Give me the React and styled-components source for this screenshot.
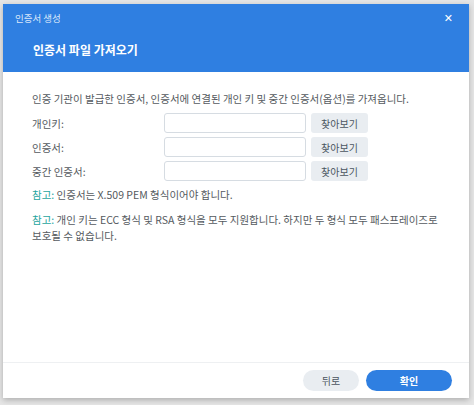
import React from "react";
import styled, { createGlobalStyle } from "styled-components";

const GlobalStyle = createGlobalStyle`
    html, body {
        margin: 0;
        padding: 0;
        background: #e6e6e6;
        font-family: "Noto Sans CJK KR", "Noto Sans", sans-serif;
    }
`;

const Page = styled.div`
    width: 474px;
    height: 405px;
    box-sizing: border-box;
    padding: 4px 5px 7px 3px;
`;

const Dialog = styled.div`
    height: 100%;
    display: flex;
    flex-direction: column;
    background: #ffffff;
    box-shadow: 0 2px 6px rgba(0, 0, 0, 0.25);
`;

const Header = styled.div`
    height: 68px;
    background: #2f7fe1;
    color: #ffffff;
    box-sizing: border-box;
    padding: 6px 16px 0 12px;
    display: flex;
    flex-direction: column;
`;

const TopBar = styled.div`
    display: flex;
    align-items: center;
    justify-content: space-between;
    height: 16px;
    font-size: 9.5px;
    color: #dbe8fa;
`;

const Close = styled.span`
    font-family: "DejaVu Sans", sans-serif;
    font-size: 11px;
    font-weight: bold;
    color: #ffffff;
`;

const Title = styled.h1`
    margin: 14px 0 0 18px;
    font-size: 12px;
    font-weight: bold;
    line-height: 20px;
`;

const Body = styled.div`
    flex: 1;
    padding: 19px 20px 0 29px;
    font-size: 10.5px;
    color: #555a60;
`;

const Desc = styled.p`
    margin: 0 0 6px;
    line-height: 16px;
`;

const Row = styled.div`
    display: grid;
    grid-template-columns: 127px 142px 57px;
    column-gap: 5px;
    align-items: center;
    margin-bottom: 4px;
`;

const Input = styled.div`
    height: 20px;
    box-sizing: border-box;
    border: 1px solid #d6dce2;
    border-radius: 3px;
    background: #fff;
`;

const Browse = styled.div`
    height: 20px;
    display: flex;
    align-items: center;
    justify-content: center;
    background: #e9edf1;
    border-radius: 3px;
    color: #4b5560;
    font-size: 10px;
`;

const Note = styled.p`
    margin: ${(p) => p.$top}px 0 0;
    line-height: 16px;
`;

const Tag = styled.span`
    color: #1fa59e;
`;

const Footer = styled.div`
    height: 34px;
    border-top: 1px solid #eef0f2;
    display: flex;
    align-items: center;
    justify-content: flex-end;
    gap: 7px;
    padding: 0 17px 1px 0;
`;

const Button = styled.div`
    width: ${(p) => p.$w}px;
    height: 21px;
    border-radius: 11px;
    display: flex;
    align-items: center;
    justify-content: center;
    font-size: 10px;
    font-weight: ${(p) => (p.$primary ? "bold" : "normal")};
    background: ${(p) => (p.$primary ? "#2f7fe1" : "#e9edf1")};
    color: ${(p) => (p.$primary ? "#ffffff" : "#4b5560")};
`;

const rows = ["개인키:", "인증서:", "중간 인증서:"];

export default function App() {
    return (
        <Page>
            <GlobalStyle />
            <Dialog>
                <Header>
                    <TopBar>
                        <span>인증서 생성</span>
                        <Close>✕</Close>
                    </TopBar>
                    <Title>인증서 파일 가져오기</Title>
                </Header>
                <Body>
                    <Desc>
                        인증 기관이 발급한 인증서, 인증서에 연결된 개인 키 및 중간 인증서(옵션)를 가져옵니다.
                    </Desc>
                    {rows.map((label) => (
                        <Row key={label}>
                            <span>{label}</span>
                            <Input />
                            <Browse>찾아보기</Browse>
                        </Row>
                    ))}
                    <Note $top={6}>
                        <Tag>참고:</Tag> 인증서는 X.509 PEM 형식이어야 합니다.
                    </Note>
                    <Note $top={9}>
                        <Tag>참고:</Tag> 개인 키는 ECC 형식 및 RSA 형식을 모두 지원합니다. 하지만 두 형식 모두 패스프레이즈로 보호될 수 없습니다.
                    </Note>
                </Body>
                <Footer>
                    <Button $w={56}>뒤로</Button>
                    <Button $w={86} $primary>확인</Button>
                </Footer>
            </Dialog>
        </Page>
    );
}
